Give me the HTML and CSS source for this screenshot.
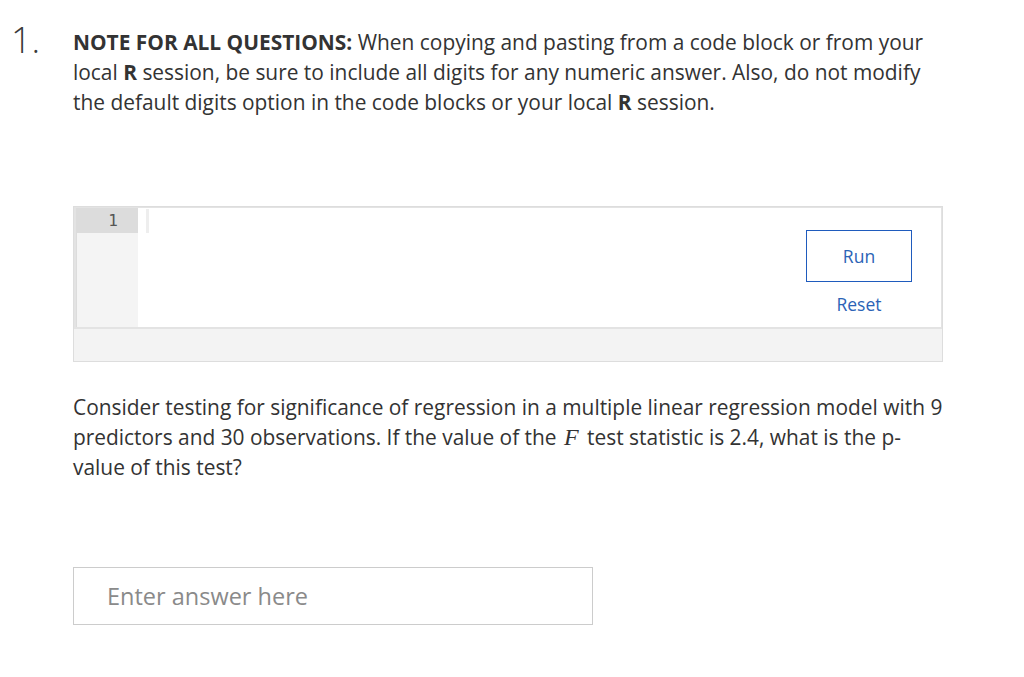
FILE: index.html
```html
<!DOCTYPE html>
<html>
<head>
<meta charset="utf-8">
<link rel="stylesheet" href="styles.css">
</head>
<body>
<div class="question">
  <div class="qnum">1.</div>
  <div class="qbody">
    <p class="note"><strong>NOTE FOR ALL QUESTIONS:</strong> When copying and pasting from a code block or from your local <strong>R</strong> session, be sure to include all digits for any numeric answer. Also, do not modify the default digits option in the code blocks or your local <strong>R</strong> session.</p>

    <div class="code-wrap">
      <div class="editor">
        <div class="gutter">
          <div class="lineno">1</div>
        </div>
        <div class="code-area">
          <div class="cursor"></div>
        </div>
        <div class="actions">
          <button class="run-btn">Run</button>
          <button class="reset-btn">Reset</button>
        </div>
      </div>
      <div class="output"></div>
    </div>

    <p class="prompt">Consider testing for significance of regression in a multiple linear regression model with 9 predictors and 30 observations. If the value of the <span class="math">F</span> test statistic is 2.4, what is the p-value of this test?</p>

    <input class="answer" type="text" placeholder="Enter answer here">
  </div>
</div>
</body>
</html>
```

FILE: styles.css
```css
html, body {
  margin: 0;
  padding: 0;
  background: #ffffff;
}
body {
  font-family: "Open Sans", "Liberation Sans", sans-serif;
  color: #333333;
}
.question {
  display: flex;
  padding-top: 27px;
}
.qnum {
  width: 73px;
  box-sizing: border-box;
  padding-left: 11px;
  font-size: 36px;
  font-weight: 300;
  line-height: 26px;
  color: #3a3a3a;
}
.qbody {
  width: 870px;
}
.note, .prompt {
  margin: 0;
  font-size: 20.9px;
  line-height: 30px;
}
.note strong {
  font-weight: 700;
}
.code-wrap {
  margin-top: 89px;
  border: 1px solid #dddddd;
  background: #f3f3f3;
}
.editor {
  display: flex;
  height: 122px;
  border: 2px solid #e3e3e3;
  border-right-width: 1px;
  border-top-width: 1px;
  background: #ffffff;
  box-sizing: border-box;
}
.gutter {
  width: 61px;
  background: #f4f4f4;
  border-left: 1px solid #dcdcdc;
}
.lineno {
  height: 25px;
  background: #dcdcdc;
  text-align: right;
  padding-right: 20px;
  font-family: "DejaVu Sans Mono", "Liberation Mono", monospace;
  font-size: 16px;
  line-height: 25px;
  color: #555;
}
.code-area {
  flex: 1;
  padding-left: 8px;
}
.cursor {
  width: 3px;
  height: 24px;
  margin-top: 1px;
  background: #eeeeee;
}
.actions {
  width: 106px;
  margin-right: 29px;
  display: flex;
  flex-direction: column;
  align-items: center;
  padding-top: 22px;
}
.run-btn {
  width: 106px;
  height: 52px;
  border: 1px solid #1f5bbd;
  background: #fff;
  color: #2b63b6;
  font-family: "Open Sans", "Liberation Sans", sans-serif;
  font-size: 17.5px;
  padding: 0;
}
.reset-btn {
  margin-top: 10px;
  border: none;
  background: none;
  color: #2b63b6;
  font-family: "Open Sans", "Liberation Sans", sans-serif;
  font-size: 17.5px;
  padding: 0;
}
.output {
  height: 32px;
}
.prompt {
  margin-top: 30px;
}
.math {
  font-family: "Liberation Serif", "DejaVu Serif", serif;
  font-style: italic;
  font-size: 24px;
  margin: 0 3px 0 2px;
}
.answer {
  display: block;
  margin-top: 85px;
  width: 520px;
  height: 58px;
  box-sizing: border-box;
  border: 1px solid #cccccc;
  padding: 0 0 0 33px;
  font-family: "Open Sans", "Liberation Sans", sans-serif;
  font-size: 23.5px;
  color: #333;
  outline: none;
}
.answer::placeholder {
  color: #8a8a8a;
}
```
